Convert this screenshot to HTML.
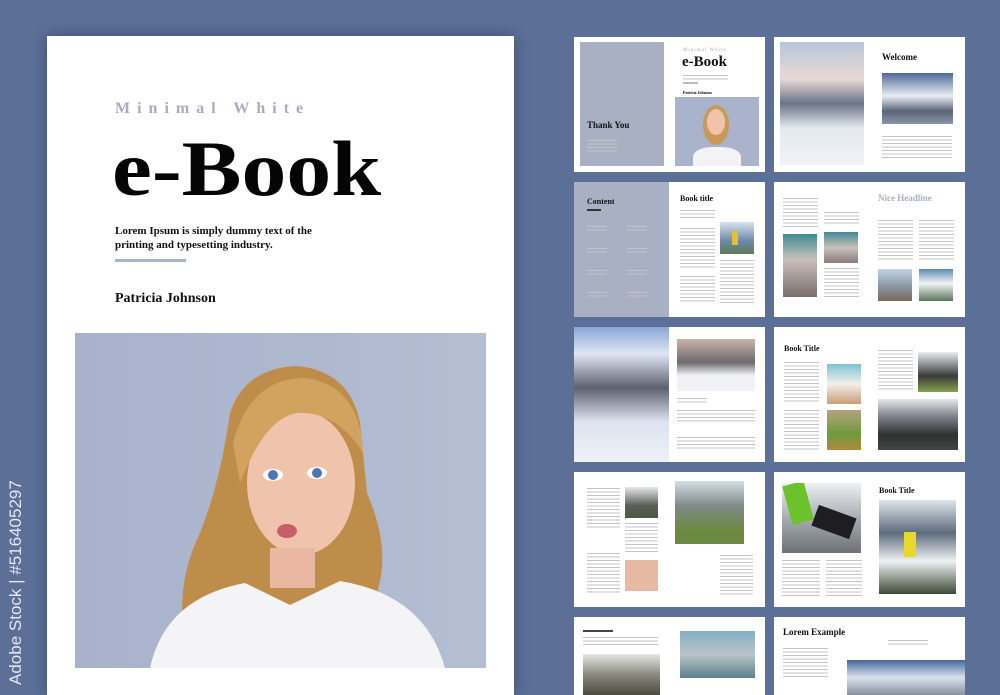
<!DOCTYPE html>
<html><head><meta charset="utf-8"><style>
*{margin:0;padding:0;box-sizing:border-box}
body{width:1000px;height:695px;overflow:hidden;background:#5b6f97;font-family:"Liberation Serif",serif;position:relative}
.a{position:absolute}
.pg{position:absolute;background:#fff}
.ln{position:absolute;height:1.5px;background:#bbb}
.tx{position:absolute;background:repeating-linear-gradient(180deg,#c4c4c8 0 1px,transparent 1px 3.5px)}
.t{position:absolute;font-weight:bold;color:#111}
</style></head><body>
<div class="a" style="left:6px;top:685px;transform:rotate(-90deg);transform-origin:0 0;color:#e4e8f0;font-family:'Liberation Sans',sans-serif;font-size:17px;white-space:nowrap;width:240px">Adobe Stock | #516405297</div>

<div class="pg" style="left:47px;top:36px;width:467px;height:659px;box-shadow:0 0 14px rgba(0,0,0,.3)"></div>
<div class="a" style="left:115px;top:100px;font-size:16px;letter-spacing:7px;color:#a7adbf;font-weight:bold">Minimal White</div>
<div class="a" style="left:112px;top:124px;font-size:78px;font-weight:bold;color:#050505;line-height:90px;transform:scaleX(1.15);transform-origin:0 0">e-Book</div>
<div class="a" style="left:115px;top:224px;font-size:11px;font-weight:bold;color:#111;line-height:14px">Lorem Ipsum is simply dummy text of the<br>printing and typesetting industry.</div>
<div class="a" style="left:115px;top:259px;width:71px;height:3px;background:#a9b3c9"></div>
<div class="a" style="left:115px;top:291px;font-size:14px;font-weight:bold;color:#111">Patricia Johnson</div>
<div class="a" style="left:75px;top:333px;width:411px;height:335px;background:linear-gradient(90deg,#a8b3cb,#aeb8cf 60%,#b5bfd3);overflow:hidden">
 <svg width="411" height="335" viewBox="0 0 411 335">
  <path d="M155 80 Q170 35 222 33 Q275 38 285 90 L292 160 Q318 220 300 265 L320 310 L110 310 Q100 250 125 200 Q145 150 155 80Z" fill="#bf8d4a"/>
  <ellipse cx="226" cy="150" rx="54" ry="72" fill="#f0c3ad"/>
  <path d="M158 110 Q175 45 230 45 Q285 52 288 120 Q262 78 222 80 Q190 85 165 150Z" fill="#d2a35f"/>
  <ellipse cx="198" cy="142" rx="10" ry="6" fill="#fff"/><circle cx="198" cy="142" r="5" fill="#4a76b5"/>
  <ellipse cx="242" cy="140" rx="10" ry="6" fill="#fff"/><circle cx="242" cy="140" r="5" fill="#4a76b5"/>
  <ellipse cx="212" cy="198" rx="10" ry="7" fill="#c75e6a"/>
  <rect x="195" y="215" width="45" height="40" fill="#e9b7a2"/>
  <path d="M75 335 Q90 265 170 250 L215 272 L265 248 Q350 262 370 335Z" fill="#f4f3f6"/>
 </svg>
</div>

<!-- row1 -->
<div class="pg" style="left:574px;top:37px;width:191px;height:135px"></div>
<div class="a" style="left:580px;top:42px;width:84px;height:124px;background:#a9b0c3"></div>
<div class="t" style="left:587px;top:120px;font-size:9px">Thank You</div>
<div class="tx" style="left:587px;top:140px;width:30px;height:14px"></div>
<div class="a" style="left:683px;top:48px;font-size:5px;color:#aab;letter-spacing:1px">Minimal White</div>
<div class="t" style="left:682px;top:54px;font-size:15px">e-Book</div>
<div class="tx" style="left:683px;top:75px;width:45px;height:6px"></div>
<div class="ln" style="left:683px;top:82px;width:15px"></div>
<div class="a" style="left:683px;top:90px;font-size:4px;font-weight:bold">Patricia Johnson</div>
<div class="a" style="left:675px;top:97px;width:84px;height:69px;background:#a9b4cc;overflow:hidden"><div class="a" style="left:28px;top:8px;width:26px;height:40px;border-radius:50%;background:#c99a55"></div><div class="a" style="left:32px;top:12px;width:18px;height:26px;border-radius:50%;background:#f0c3ad"></div><div class="a" style="left:18px;top:50px;width:48px;height:25px;border-radius:40% 40% 0 0;background:#f3f3f6"></div></div>

<div class="pg" style="left:774px;top:37px;width:191px;height:135px"></div>
<div class="a" style="left:780px;top:42px;width:84px;height:123px;background:linear-gradient(180deg,#b6c6d8 0%,#e8d9d6 30%,#6b7487 50%,#e4e9f0 70%,#f1f3f7 100%)"></div>
<div class="t" style="left:882px;top:52px;font-size:9px">Welcome</div>
<div class="a" style="left:882px;top:73px;width:71px;height:51px;background:linear-gradient(180deg,#4d6a98 0%,#e8edf4 45%,#5a6578 75%,#8a96aa 100%)"></div>
<div class="tx" style="left:882px;top:136px;width:70px;height:22px"></div>

<!-- row2 -->
<div class="pg" style="left:574px;top:182px;width:191px;height:135px"></div>
<div class="a" style="left:574px;top:182px;width:95px;height:135px;background:#a9b0c3"></div>
<div class="t" style="left:587px;top:197px;font-size:8px">Content</div>
<div class="ln" style="left:587px;top:209px;width:14px;background:#333"></div>
<div class="tx" style="left:587px;top:226px;width:20px;height:6px"></div><div class="tx" style="left:627px;top:226px;width:20px;height:6px"></div>
<div class="tx" style="left:587px;top:248px;width:20px;height:6px"></div><div class="tx" style="left:627px;top:248px;width:20px;height:6px"></div>
<div class="tx" style="left:587px;top:270px;width:20px;height:6px"></div><div class="tx" style="left:627px;top:270px;width:20px;height:6px"></div>
<div class="tx" style="left:587px;top:292px;width:20px;height:6px"></div><div class="tx" style="left:627px;top:292px;width:20px;height:6px"></div>
<div class="t" style="left:680px;top:194px;font-size:8px">Book title</div>
<div class="a" style="left:720px;top:222px;width:34px;height:32px;background:linear-gradient(180deg,#d8e2ee,#6c88a8 60%,#5f7a58)"><div class="a" style="left:12px;top:9px;width:6px;height:14px;background:#e4c12a"></div></div>
<div class="tx" style="left:680px;top:210px;width:35px;height:8px"></div>
<div class="tx" style="left:680px;top:228px;width:35px;height:40px"></div><div class="tx" style="left:680px;top:276px;width:35px;height:28px"></div>
<div class="tx" style="left:720px;top:260px;width:34px;height:44px"></div>

<div class="pg" style="left:774px;top:182px;width:191px;height:135px"></div>
<div class="a" style="left:878px;top:193px;font-size:9px;font-weight:bold;color:#a9b0c4">Nice Headline</div>
<div class="tx" style="left:783px;top:198px;width:35px;height:30px"></div>
<div class="tx" style="left:824px;top:212px;width:35px;height:14px"></div>
<div class="a" style="left:783px;top:234px;width:34px;height:63px;background:linear-gradient(180deg,#3f8a94,#c9c0bb 40%,#7a6e6e)"></div>
<div class="a" style="left:824px;top:232px;width:34px;height:31px;background:linear-gradient(180deg,#3f8a94,#c9c0bb 50%,#8a7c7c)"></div>
<div class="tx" style="left:824px;top:268px;width:35px;height:30px"></div>
<div class="a" style="left:878px;top:269px;width:34px;height:32px;background:linear-gradient(180deg,#c3d5e6,#8e9aa8 50%,#76695c)"></div>
<div class="a" style="left:919px;top:269px;width:34px;height:32px;background:linear-gradient(180deg,#5c8bb0,#f1f3f6 45%,#5c7558)"></div>
<div class="tx" style="left:878px;top:220px;width:35px;height:40px"></div><div class="tx" style="left:919px;top:220px;width:35px;height:40px"></div>

<!-- row3 -->
<div class="pg" style="left:574px;top:327px;width:191px;height:135px"></div>
<div class="a" style="left:574px;top:327px;width:95px;height:135px;background:linear-gradient(180deg,#8aa6d8 0%,#dfe6f4 20%,#5c6170 45%,#dce3ef 70%,#eef1f6 100%)"></div>
<div class="a" style="left:677px;top:339px;width:78px;height:52px;background:linear-gradient(180deg,#c7b5aa,#6e6a6e 45%,#f0f2f5 70%)"></div>
<div class="tx" style="left:677px;top:398px;width:30px;height:6px"></div><div class="tx" style="left:677px;top:410px;width:78px;height:12px"></div><div class="tx" style="left:677px;top:437px;width:78px;height:12px"></div>

<div class="pg" style="left:774px;top:327px;width:191px;height:135px"></div>
<div class="t" style="left:784px;top:344px;font-size:8px">Book Title</div>
<div class="a" style="left:827px;top:364px;width:34px;height:40px;background:linear-gradient(180deg,#7ec3d8,#f3efe8 50%,#c79e78)"></div>
<div class="a" style="left:827px;top:410px;width:34px;height:40px;background:linear-gradient(180deg,#b4a37c,#6f9a3d 60%,#b18a40)"></div>
<div class="a" style="left:918px;top:352px;width:40px;height:40px;background:linear-gradient(180deg,#e9ecef,#3a3a3a 60%,#86a24d)"></div>
<div class="a" style="left:878px;top:399px;width:80px;height:51px;background:linear-gradient(180deg,#e6e7ea,#7d8088 35%,#2e3031 70%,#444)"></div>
<div class="tx" style="left:784px;top:362px;width:35px;height:40px"></div><div class="tx" style="left:784px;top:410px;width:35px;height:40px"></div><div class="tx" style="left:878px;top:350px;width:35px;height:40px"></div>

<!-- row4 -->
<div class="pg" style="left:574px;top:472px;width:191px;height:135px"></div>
<div class="a" style="left:625px;top:487px;width:33px;height:31px;background:linear-gradient(180deg,#e4e8ec,#5a5e57 60%,#4b5a43)"></div>
<div class="a" style="left:675px;top:481px;width:69px;height:63px;background:linear-gradient(180deg,#d4dde4,#7e8a86 40%,#6b8a3f 80%)"></div>
<div class="a" style="left:625px;top:560px;width:33px;height:31px;background:#e6b9a0"></div>
<div class="tx" style="left:587px;top:488px;width:33px;height:40px"></div><div class="tx" style="left:587px;top:553px;width:33px;height:40px"></div><div class="tx" style="left:625px;top:523px;width:33px;height:30px"></div><div class="tx" style="left:720px;top:555px;width:33px;height:40px"></div>

<div class="pg" style="left:774px;top:472px;width:191px;height:135px"></div>
<div class="a" style="left:782px;top:483px;width:79px;height:70px;background:linear-gradient(180deg,#eef0f2,#9aa0a6 60%,#6f7276);overflow:hidden"><div class="a" style="left:5px;top:0;width:22px;height:40px;background:#6bc22b;transform:rotate(-15deg)"></div><div class="a" style="left:32px;top:28px;width:40px;height:22px;background:#1d1d22;transform:rotate(20deg)"></div></div>
<div class="t" style="left:879px;top:486px;font-size:8px">Book Title</div>
<div class="a" style="left:879px;top:500px;width:77px;height:94px;background:linear-gradient(180deg,#dfe5ea,#5d6b7c 35%,#eef1f3 65%,#3e4a38)"><div class="a" style="left:25px;top:32px;width:12px;height:25px;background:#e7d82a"></div></div>
<div class="tx" style="left:782px;top:560px;width:38px;height:36px"></div><div class="tx" style="left:826px;top:560px;width:36px;height:36px"></div>

<!-- row5 -->
<div class="pg" style="left:574px;top:617px;width:191px;height:78px"></div>
<div class="a" style="left:583px;top:654px;width:77px;height:41px;background:linear-gradient(180deg,#e6e8e4,#8a8a80 50%,#4a4a3e)"></div>
<div class="a" style="left:680px;top:631px;width:75px;height:47px;background:linear-gradient(180deg,#88aec4,#b8c4c8 50%,#5f7f8c)"></div>
<div class="ln" style="left:583px;top:630px;width:30px;background:#444"></div><div class="tx" style="left:583px;top:637px;width:75px;height:10px"></div>

<div class="pg" style="left:774px;top:617px;width:191px;height:78px"></div>
<div class="t" style="left:783px;top:627px;font-size:9px">Lorem Example</div>
<div class="a" style="left:847px;top:660px;width:118px;height:35px;background:linear-gradient(180deg,#44679a,#d9e1ec 50%,#8a92a0)"></div>
<div class="tx" style="left:783px;top:648px;width:45px;height:30px"></div><div class="tx" style="left:888px;top:640px;width:40px;height:6px"></div>
</body></html>
